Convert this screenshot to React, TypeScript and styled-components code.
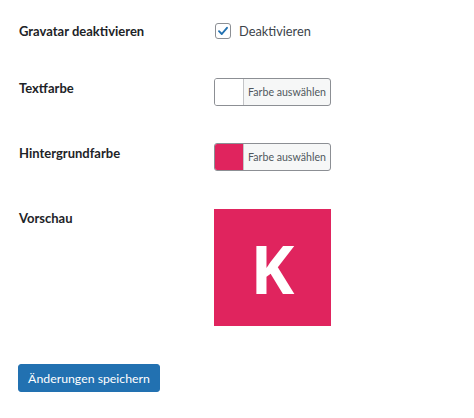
import styled, { createGlobalStyle } from 'styled-components';

const GlobalStyle = createGlobalStyle`
  html, body {
    margin: 0;
    padding: 0;
    background: #ffffff;
  }
  body {
    font-family: Lato, "Noto Sans", sans-serif;
    color: #3c434a;
  }
`

const Page = styled.div`
  padding: 21px 0 0 19px;
  display: flex;
  flex-direction: column;
  gap: 37px;
`

const Row = styled.div`
  display: grid;
  grid-template-columns: 195px auto;
  align-items: start;
`

const Label = styled.div`
  font-size: 13px;
  font-weight: 700;
  line-height: 20px;
  color: #1d2327;
`

const CheckLabel = styled.label`
  display: flex;
  align-items: center;
  gap: 8px;
  height: 20px;
  font-size: 12.8px;
  color: #3c434a;
`

const Box = styled.span`
  width: 14px;
  height: 14px;
  border: 1px solid #8c8f94;
  border-radius: 3px;
  display: flex;
  align-items: center;
  justify-content: center;
  margin-left: 1px;
`

const ColorButton = styled.button<{ $swatch: string }>`
  display: flex;
  align-items: stretch;
  width: 117px;
  height: 28px;
  padding: 0;
  border: 1px solid #8c8f94;
  border-radius: 3px;
  background: #f6f7f7;
  overflow: hidden;
  cursor: pointer;

  &::before {
    content: '';
    width: 28px;
    background: ${p => p.$swatch};
    border-right: 1px solid #c3c4c7;
  }
`

const ColorText = styled.span`
  flex: 1;
  display: flex;
  align-items: center;
  justify-content: center;
  font-family: Lato, sans-serif;
  font-size: 10.6px;
  color: #50575e;
`

const Preview = styled.div<{ $bg: string }>`
  width: 117px;
  height: 117px;
  margin-top: 1px;
  background: ${p => p.$bg};
  display: flex;
  align-items: center;
  justify-content: center;
  color: #ffffff;
  font-family: "Open Sans", sans-serif;
  font-weight: 700;
  font-size: 66px;
  line-height: 1;
`

const SaveButton = styled.button`
  align-self: flex-start;
  margin-top: 1px;
  margin-left: -1px;
  height: 28px;
  width: 142px;
  padding: 0;
  border: 1px solid #2271b1;
  border-radius: 3px;
  background: #2271b1;
  color: #ffffff;
  font-family: Lato, sans-serif;
  font-size: 12.3px;
  cursor: pointer;
`

const pink = '#e0245e'

export default function App() {
  return (
    <>
      <GlobalStyle />
      <Page>
        <Row>
          <Label>Gravatar deaktivieren</Label>
          <CheckLabel>
            <Box>
              <svg width="12" height="12" viewBox="0 0 12 12">
                <path d="M2 6.2 L4.8 9 L10 2.8" fill="none" stroke="#2271b1" strokeWidth="1.9" strokeLinecap="round" strokeLinejoin="round" />
              </svg>
            </Box>
            Deaktivieren
          </CheckLabel>
        </Row>
        <Row>
          <Label>Textfarbe</Label>
          <ColorButton $swatch="#ffffff">
            <ColorText>Farbe auswählen</ColorText>
          </ColorButton>
        </Row>
        <Row>
          <Label>Hintergrundfarbe</Label>
          <ColorButton $swatch={pink}>
            <ColorText>Farbe auswählen</ColorText>
          </ColorButton>
        </Row>
        <Row>
          <Label>Vorschau</Label>
          <Preview $bg={pink}>K</Preview>
        </Row>
        <SaveButton>Änderungen speichern</SaveButton>
      </Page>
    </>
  )
}
